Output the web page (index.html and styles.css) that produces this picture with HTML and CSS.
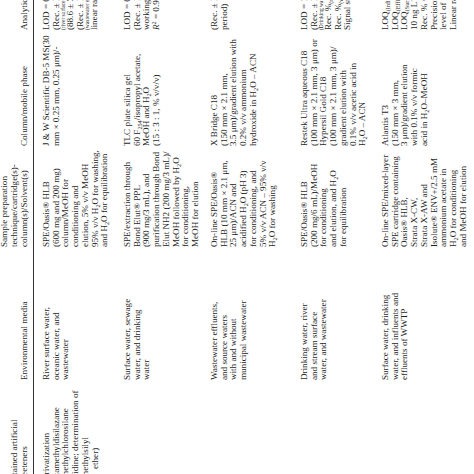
FILE: index.html
```html
<!DOCTYPE html>
<html lang="en">
<head>
<meta charset="utf-8">
<title>Artificial sweeteners table</title>
<link rel="stylesheet" href="styles.css">
</head>
<body>
<div class="stage">
  <div class="page">
    <table class="tbl">
      <colgroup>
        <col class="c-a"><col class="c-b"><col class="c-c"><col class="c-d"><col class="c-e">
      </colgroup>
      <thead>
        <tr>
          <th>Obtained artificial<br>sweeteners</th>
          <th>Environmental media</th>
          <th>Sample preparation<br>technique/cartridge(s)-<br>column(s)/Solvent(s)</th>
          <th>Column/mobile phase</th>
          <th>Analytical performance</th>
        </tr>
      </thead>
      <tbody>
        <tr class="r1">
          <td>(derivatization<br>hexamethyldisilazane<br>trimethylchlorosilane<br>pyridine; determination of<br>trimethylsilyl<br><span class="ind">ether)</span></td>
          <td>River surface water,<br>oceanic water, and<br>wastewater</td>
          <td>SPE/Oasis® HLB<br>(600 mg and 200 mg)<br>column/MeOH for<br>conditioning and<br>elution, 5% v/v MeOH<br>95% v/v H<sub>2</sub>O for washing,<br>and H<sub>2</sub>O for equilibration</td>
          <td>J &amp; W Scientific DB-5 MS(30<br>mm × 0.25 mm, 0.25 μm)/-</td>
          <td>
            <div>LOD = 0.1 μg L<sup>−1</sup></div>
            <div>(Rec. ± RSD)</div>
            <div class="tiny">(river surface water)</div>
            <div>(88.6 ± 3.2)</div>
            <div>(Rec. ± RSD)</div>
            <div class="tiny">(wastewater effluent)</div>
            <div>linear range</div>
          </td>
        </tr>
        <tr class="r2">
          <td></td>
          <td>Surface water, sewage<br>water, and drinking<br>water</td>
          <td>SPE/extraction through<br>Bond Elut® PPL<br>(900 mg/3 mL), and<br>purification through Bond<br>Elut NH2 (200 mg/3 mL)/<br>MeOH followed by H<sub>2</sub>O<br>for conditioning,<br>MeOH for elution</td>
          <td>TLC plate silica gel<br>60 F<sub>254</sub>/isopropyl acetate,<br>MeOH and H<sub>2</sub>O<br>(15 : 3 : 1, % v/v/v)</td>
          <td>
            <div>LOD = 0.5 ng</div>
            <div>(Rec. ± RSD)</div>
            <div>working range</div>
            <div><i>R</i><sup>2</sup> = 0.99</div>
          </td>
        </tr>
        <tr class="r3">
          <td></td>
          <td>Wastewater effluents,<br>and source waters<br>with and without<br>municipal wastewater</td>
          <td>On-line SPE/Oasis®<br>HLB (10 mm × 2.1 μm,<br>25 μm)/ACN and<br>acidified H<sub>2</sub>O (pH 3)<br>for conditioning, and<br>5% v/v ACN – 95% v/v<br>H<sub>2</sub>O for washing</td>
          <td>X Bridge C18<br>(150 mm × 2.1 mm,<br>3.5 μm)/gradient elution with<br>0.2% v/v ammonium<br>hydroxide in H<sub>2</sub>O – ACN</td>
          <td>
            <div>(Rec. ± RSD over</div>
            <div>period)</div>
          </td>
        </tr>
        <tr class="r4">
          <td></td>
          <td>Drinking water, river<br>and stream surface<br>water, and wastewater</td>
          <td>SPE/Oasis® HLB<br>(200 mg/6 mL)/MeOH<br>for conditioning<br>and elution, and H<sub>2</sub>O<br>for equilibration</td>
          <td>Restek Ultra aqueous C18<br>(100 mm × 2.1 mm, 3 μm) or<br>Hypersil Gold C18<br>(100 mm × 2.1 mm, 3 μm)/<br>gradient elution with<br>0.1% v/v acetic acid in<br>H<sub>2</sub>O – ACN</td>
          <td>
            <div>LOD = 10 ng</div>
            <div>(Rec. ± RSD)</div>
            <div class="tiny">(Drinking water)</div>
            <div>Rec. %<sub>(river)</sub></div>
            <div>Rec. %<sub>(waste)</sub></div>
            <div>Signal suppression</div>
          </td>
        </tr>
        <tr class="r5">
          <td></td>
          <td>Surface water, drinking<br>water, and influents and<br>effluents of WWTP</td>
          <td>On-line SPE/mixed-layer<br>SPE cartridge containing<br>Oasis® HLB,<br>Strata X-CW,<br>Strata X-AW and<br>Isolute® ENV+/2.5 mM<br>ammonium acetate in<br>H<sub>2</sub>O for conditioning<br>and MeOH for elution</td>
          <td>Atlantis T3<br>(150 mm × 3 mm,<br>3 μm)/gradient elution<br>with 0.1% v/v formic<br>acid in H<sub>2</sub>O–MeOH</td>
          <td>
            <div>LOQ<sub>(Influent)</sub> = 50</div>
            <div>LOQ<sub>(Effluent)</sub> = 20</div>
            <div>LOQ<sub>(Surface water)</sub></div>
            <div>10 ng L<sup>−1</sup></div>
            <div>Rec. % = 80</div>
            <div>Precision at</div>
            <div>level of</div>
            <div>Linear range</div>
          </td>
        </tr>
      </tbody>
    </table>
  </div>
</div>
</body>
</html>
```

FILE: styles.css
```css
html, body {
  margin: 0;
  padding: 0;
  background: #ffffff;
}

.stage {
  width: 474px;
  height: 474px;
  overflow: hidden;
  background: #ffffff;
}

.page {
  width: 474px;
  height: 474px;
  transform: rotate(-90deg);
}

.tbl {
  border-collapse: collapse;
  table-layout: fixed;
  width: 606px;
  margin-left: -12px;
  font-family: "Liberation Serif", "Times New Roman", serif;
  font-size: 9.1px;
  line-height: 9.75px;
  color: #1e1e1e;
}

.c-a { width: 106px; }
.c-b { width: 133px; }
.c-c { width: 101px; }
.c-d { width: 116px; }
.c-e { width: 150px; }

.tbl th,
.tbl td {
  padding: 0;
  text-align: left;
  white-space: nowrap;
  vertical-align: top;
  font-weight: normal;
}

.tbl th {
  vertical-align: bottom;
  padding-bottom: 3.5px;
  border-bottom: 1px solid #333333;
}

.tbl sub,
.tbl sup {
  font-size: 0.68em;
  line-height: 0;
}

.tbl sub { vertical-align: -0.25em; }
.tbl sup { vertical-align: 0.45em; }

.r1 td { padding-top: 8px; padding-bottom: 12.75px; }
.r2 td { padding-bottom: 9px; }
.r3 td { padding-bottom: 21.75px; }
.r4 td { padding-bottom: 12.75px; }
.r5 td { padding-bottom: 8px; }

.tiny {
  font-size: 5.5px;
  line-height: 4.5px;
}

.ind {
  padding-left: 17px;
}
```
